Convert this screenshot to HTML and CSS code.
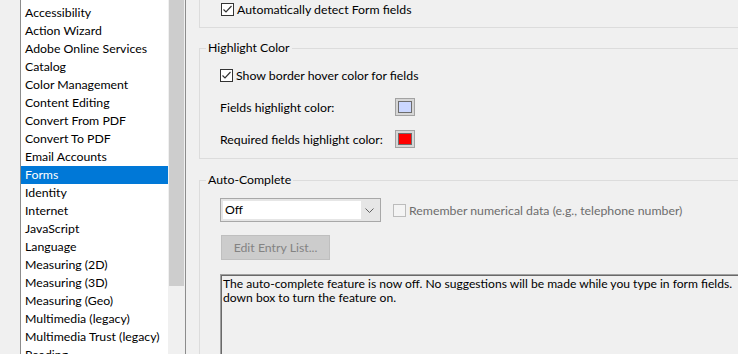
FILE: index.html
```html
<!DOCTYPE html>
<html lang="en">
<head>
  <meta charset="UTF-8">
  <title>Preferences - Forms</title>
  <link rel="stylesheet" href="styles.css">
</head>
<body>
  <div class="nav">
    <ul class="nav-list">
      <li>Accessibility</li>
      <li>Action Wizard</li>
      <li>Adobe Online Services</li>
      <li>Catalog</li>
      <li>Color Management</li>
      <li>Content Editing</li>
      <li>Convert From PDF</li>
      <li>Convert To PDF</li>
      <li>Email Accounts</li>
      <li class="active">Forms</li>
      <li>Identity</li>
      <li>Internet</li>
      <li>JavaScript</li>
      <li>Language</li>
      <li>Measuring (2D)</li>
      <li>Measuring (3D)</li>
      <li>Measuring (Geo)</li>
      <li>Multimedia (legacy)</li>
      <li>Multimedia Trust (legacy)</li>
      <li>Reading</li>
    </ul>
    <div class="scrollbar"><div class="thumb"></div></div>
  </div>

  <div class="main">
    <div class="group-first">
      <label class="check-row">
        <span class="check checked">
          <svg width="11" height="11" viewBox="0 0 11 11"><polyline points="1.5,5.5 4,8 9.5,2" fill="none" stroke="#333" stroke-width="1.2"/></svg>
        </span>
        Automatically detect Form fields
      </label>
    </div>

    <fieldset class="group group-highlight">
      <legend>Highlight Color</legend>
      <div class="group-body">
        <div class="row">
          <label class="check-row">
            <span class="check checked">
              <svg width="11" height="11" viewBox="0 0 11 11"><polyline points="1.5,5.5 4,8 9.5,2" fill="none" stroke="#333" stroke-width="1.2"/></svg>
            </span>
            Show border hover color for fields
          </label>
        </div>
        <div class="row">
          <span class="row-label">Fields highlight color:</span>
          <span class="swatch"><span class="swatch-fill swatch-blue"></span></span>
        </div>
        <div class="row">
          <span class="row-label">Required fields highlight color:</span>
          <span class="swatch"><span class="swatch-fill swatch-red"></span></span>
        </div>
      </div>
    </fieldset>

    <fieldset class="group group-auto">
      <legend>Auto-Complete</legend>
      <div class="group-body">
        <div class="combo-row">
          <div class="combo">
            <span class="combo-value">Off</span>
            <span class="combo-arrow">
              <svg width="9" height="5" viewBox="0 0 9 5"><polyline points="0.5,0.5 4.5,4.5 8.5,0.5" fill="none" stroke="#606060" stroke-width="1"/></svg>
            </span>
          </div>
          <label class="check-row disabled">
            <span class="check"></span>
            Remember numerical data (e.g., telephone number)
          </label>
        </div>
        <button class="btn" disabled>Edit Entry List...</button>
        <div class="note">The auto-complete feature is now off. No suggestions will be made while you type in form fields.<br>down box to turn the feature on.</div>
      </div>
    </fieldset>
  </div>
</body>
</html>
```

FILE: styles.css
```css
html, body {
  margin: 0;
  width: 738px;
  height: 354px;
  overflow: hidden;
}

body {
  display: flex;
  align-items: flex-start;
  background: #f0f0f0;
  color: #000;
  font-family: Lato, "Liberation Sans", sans-serif;
  font-size: 12.3px;
}

/* left category list */
.nav {
  display: flex;
  flex: none;
  box-sizing: border-box;
  width: 166px;
  height: 354px;
  margin-left: 20px;
  background: #fff;
  border-left: 1px solid #8c8c8c;
  border-right: 1px solid #8c8c8c;
}

.nav-list {
  flex: 1;
  list-style: none;
  margin: 0;
  padding: 4px 0 0;
  overflow: hidden;
}

.nav-list li {
  height: 18px;
  line-height: 18px;
  padding-left: 4px;
  white-space: nowrap;
}

.nav-list li.active {
  background: #0078d7;
  color: #fff;
}

.scrollbar {
  width: 17px;
  flex: none;
  background: #f0f0f0;
}

.thumb {
  height: 286px;
  margin: 0 1px;
  background: #cdcdcd;
}

/* right panel */
.main {
  flex: none;
  width: 620px;
  margin-left: 13px;
}

.group-first {
  box-sizing: border-box;
  height: 28px;
  padding: 1px 0 0 21px;
  border-left: 1px solid #dcdcdc;
  border-bottom: 1px solid #dcdcdc;
}

.group {
  box-sizing: border-box;
  margin: 0;
  padding: 0;
  min-width: 0;
  border: 1px solid #dcdcdc;
}

.group legend {
  margin-left: 6px;
  padding: 0 2px;
  line-height: 16px;
}

.group-highlight {
  height: 119px;
  margin-top: 12px;
}

.group-auto {
  height: 240px;
  margin-top: 13px;
}

.group-highlight .group-body {
  padding: 3px 0 0 20px;
}

.group-auto .group-body {
  padding: 10px 0 0 20px;
}

.row {
  display: flex;
  align-items: center;
  height: 32px;
}

.row-label {
  width: 175px;
}

.check-row {
  display: flex;
  align-items: center;
  gap: 3px;
  height: 16px;
  white-space: nowrap;
}

.check {
  box-sizing: border-box;
  width: 13px;
  height: 13px;
  border: 1px solid #333;
  background: #fff;
}

.check svg {
  display: block;
}

.check-row.disabled {
  color: #6d6d6d;
  margin-left: 12px;
}

.check-row.disabled .check {
  border-color: #bcbcbc;
  background: #f4f4f4;
}

.swatch {
  box-sizing: border-box;
  width: 20px;
  height: 18px;
  padding: 2px;
  border: 1px solid #a3a3a3;
  background: #d6d6d6;
}

.swatch-fill {
  display: block;
  box-sizing: border-box;
  height: 100%;
  border: 1px solid #6d6d6d;
}

.swatch-blue {
  background: #cbd7ff;
}

.swatch-red {
  background: #ff0000;
}

.combo-row {
  display: flex;
  align-items: center;
}

.combo {
  display: flex;
  box-sizing: border-box;
  width: 161px;
  height: 24px;
  padding: 2px;
  border: 1px solid #a8a8a8;
  background: #e6e6e6;
}

.combo-value {
  flex: 1;
  padding-left: 2px;
  line-height: 18px;
  background: #fff;
}

.combo-arrow {
  display: flex;
  align-items: center;
  justify-content: center;
  width: 17px;
}

.btn {
  display: block;
  box-sizing: border-box;
  width: 109px;
  height: 25px;
  margin-top: 13px;
  margin-left: 1px;
  padding: 0;
  border: 1px solid #bfbfbf;
  background: #cccccc;
  color: #838383;
  font: inherit;
}

.note {
  box-sizing: border-box;
  width: 600px;
  height: 120px;
  margin-top: 14px;
  padding: 2px 3px 2px 2px;
  border: 1px solid #a0a0a0;
  box-shadow: inset 1px 1px 0 #696969;
  font-size: 12.1px;
  line-height: 14px;
  white-space: nowrap;
  overflow: hidden;
}
```
